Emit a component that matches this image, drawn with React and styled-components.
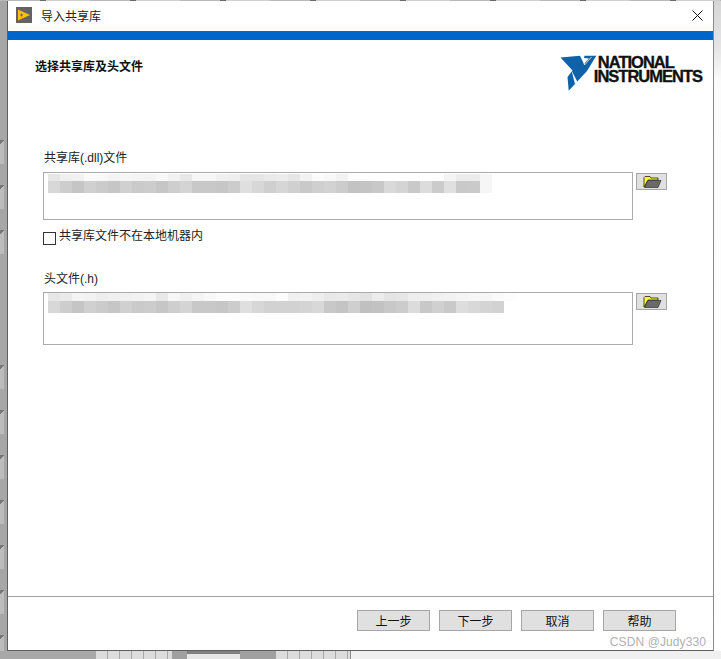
import React from "react";
import styled, { createGlobalStyle } from "styled-components";

const Global = createGlobalStyle`
  html, body { margin: 0; padding: 0; background: #f2f2f2; }
  #root { width: 721px; height: 659px; overflow: hidden; }
  * { box-sizing: border-box; }
`;

const Page = styled.div`
  width: 721px;
  height: 659px;
  display: flex;
  flex-direction: column;
  font-family: "Liberation Sans", "Noto Sans CJK SC", sans-serif;
  font-size: 12px;
  color: #111;
`;
const TopEdge = styled.div`
  height: 1px;
  flex: none;
  background: repeating-linear-gradient(90deg, #b9b9b9 0 40px, #6a6a6a 40px 46px, #d0d0d0 46px 90px);
`;
const Middle = styled.div`
  flex: none;
  height: 650px;
  display: flex;
`;
const LeftBackdrop = styled.div`
  width: 7px;
  flex: none;
  overflow: hidden;
  padding-top: 4px;
  background: #a6a6a6;
`;
const Tick = styled.div`
  height: 45px;
  background: ${(p) =>
    p.$on
      ? "linear-gradient(135deg, #777 0 3px, transparent 3px) 0 0 / 4px 5px no-repeat, linear-gradient(90deg, #bcbcbc 0 4px, transparent 4px) 0 0 / 7px 24px no-repeat"
      : "none"};
`;
const RightBackdrop = styled.div`
  width: 8px;
  flex: none;
  background: linear-gradient(180deg, #d6d6d6 0, #e4e4e4 45px, #fbfbfb 80px, #fff 100%);
`;
const Window = styled.div`
  width: 707px;
  flex: none;
  background: #fff;
  border-left: 1px solid #5f5f5f;
  border-right: 1px solid #8a8a8a;
  border-bottom: 1px solid #5f5f5f;
  display: flex;
  flex-direction: column;
`;
const TitleBar = styled.div`
  height: 30px;
  flex: none;
  display: flex;
  align-items: center;
  padding: 0 8px 2px 8px;
  gap: 9px;
`;
const TitleText = styled.span`
  flex: 1;
  font-size: 12px;
  color: #222;
`;
const CloseIcon = styled.svg`
  width: 11px;
  height: 11px;
  margin-right: 2px;
  flex: none;
`;
const BlueBar = styled.div`
  height: 9px;
  flex: none;
  background: #0066cc;
`;
const Header = styled.div`
  flex: none;
  height: 60px;
  display: flex;
  justify-content: space-between;
  align-items: flex-start;
  padding: 14px 11px 0 27px;
`;
const Heading = styled.h1`
  margin: 5px 0 0;
  font-size: 12px;
  line-height: 16px;
  font-weight: 700;
  color: #111;
`;
const Logo = styled.div`
  display: flex;
  margin-top: 1px;
`;
const LogoWords = styled.div`
  display: flex;
  flex-direction: column;
  font-weight: 700;
  font-size: 16.5px;
  line-height: 14px;
  letter-spacing: -1px;
  color: #111;
  white-space: nowrap;
  margin-left: -3px;
  -webkit-text-stroke: 0.35px #111;
`;
const LogoLine = styled.span`
  display: block;
  padding-left: ${(p) => p.$indent}px;
`;
const Content = styled.div`
  flex: 1;
  display: flex;
  flex-direction: column;
  padding: 50px 46px 0 35px;
`;
const FieldLabel = styled.div`
  font-size: 12px;
  line-height: 16px;
  margin: 0 0 6px 1px;
  color: #222;
`;
const FieldRow = styled.div`
  display: flex;
  align-items: flex-start;
  gap: 3px;
`;
const PathBox = styled.div`
  width: 590px;
  height: ${(p) => p.$h}px;
  flex: none;
  border: 1px solid #ababab;
  padding: ${(p) => p.$top}px 0 0 4px;
  background: #fff;
`;
const Smear = styled.div`
  display: flex;
  height: ${(p) => p.$h}px;
`;
const Pixel = styled.i`
  display: block;
  width: 12px;
  flex: none;
  height: 100%;
`;
const BrowseButton = styled.button`
  width: 31px;
  height: 17px;
  margin-top: 1px;
  padding: 0;
  flex: none;
  border: 1px solid #a6a6a6;
  background: #e0e0e0;
  display: flex;
  align-items: center;
  justify-content: center;
`;
const CheckRow = styled.label`
  display: flex;
  align-items: flex-start;
  gap: 3px;
  margin-top: 11px;
  height: 33px;
  line-height: 16px;
  color: #222;
`;
const CheckBox = styled.span`
  width: 13px;
  height: 13px;
  margin-top: 1px;
  border: 1px solid #333;
  background: #fff;
  flex: none;
`;
const CheckText = styled.span`
  margin-top: -3px;
`;
const SecondLabel = styled(FieldLabel)`
  margin-top: 7px;
  margin-bottom: 5px;
`;
const Footer = styled.div`
  flex: none;
  height: 54px;
  border-top: 1px solid #a0a0a0;
  display: flex;
  justify-content: flex-end;
  gap: 9px;
  padding: 13px 37px 0 0;
  position: relative;
`;
const FooterButton = styled.button`
  width: 73px;
  height: 21px;
  padding: 0;
  border: 1px solid #a6a6a6;
  background: #e0e0e0;
  font-family: inherit;
  font-size: 12px;
  color: #111;
`;
const Watermark = styled.span`
  position: absolute;
  right: 7px;
  bottom: 0;
  font-family: "Liberation Sans", sans-serif;
  font-size: 12px;
  line-height: 15px;
  color: #b0b0b0;
  letter-spacing: 0.1px;
`;
const BottomEdge = styled.div`
  flex: 1;
  display: flex;
`;
const EdgePart = styled.div`
  width: ${(p) => p.$w}px;
  flex: ${(p) => (p.$w ? "none" : 1)};
  background: ${(p) => p.$bg};
`;
const stripes = "repeating-linear-gradient(90deg, #dcdcdc 0 11px, #a8a8a8 11px 12px)";

const ticks = [0, 0, 0, 1, 1, 1, 0, 0, 1, 1, 1, 1, 1, 1, 1];

const tones1 = "d8 cd c5 d0 cb c6 d0 ca cc c6 ce d4 c8 c8 c6 cc df d7 cf d6 d0 c9 cf d2 cc c3 c4 c8 d9 d4 c9 dc cb e0 c9 ca f6".split(" ");
const top1 = "e6 f0 f2 fa f8 f4 f6 f4 f3 f8 f2 e8 f6 f6 f0 ee e5 e5 ea ec e6 f2 fb f8 f2 fc fe fe ff ff ff ff ff f4 ec ec f6".split(" ");
const tones2 = "d8 cd c5 d0 cb c6 d0 ca cc c6 ce d4 c8 c8 c6 cc df d7 d2 d2 d2 d4 d8 c8 c4 cf c0 c2 c8 cc dc c8 d0 c9 dd d8 d4 d2".split(" ");
const top2 = "e6 ea f4 f2 ee f0 f0 f2 f4 e8 f6 f0 f4 f8 fc fc fa f8 f8 fc f0 f2 ee e8 ea e6 e2 ec e4 e6 ee ee f0 f2 f4 f6 f6 fa fc".split(" ");

function BlurredPath({ top, main, topH }) {
  return (
    <>
      <Smear $h={topH}>
        {top.map((t, i) => (
          <Pixel key={i} style={{ background: `#${t}${t}${t}` }} />
        ))}
      </Smear>
      <Smear $h={12}>
        {main.map((t, i) => (
          <Pixel key={i} style={{ background: `#${t}${t}${t}` }} />
        ))}
      </Smear>
    </>
  );
}

const Folder = () => (
  <svg width="20" height="12" viewBox="0 0 20 12">
    <path d="M2 11V1.5L3 .5h5l1 1.5h7v2H6L2 11z" fill="#ffff1e" stroke="#222" strokeWidth=".8" />
    <path d="M2.5 11.5L6 4.5h13l-3 7z" fill="#6a6a6a" stroke="#222" strokeWidth=".6" />
  </svg>
);

const AppIcon = () => (
  <svg width="16" height="16" viewBox="0 0 16 16" style={{ flex: "none" }}>
    <rect width="16" height="16" fill="#636363" />
    <path d="M2 2.5L14 8 2 13.5z" fill="#fcc10f" />
    <path d="M4 8h3M5.5 6.5v3" stroke="#5a62a8" strokeWidth="1" />
  </svg>
);

const NiMark = () => (
  <svg width="37" height="36" viewBox="0 0 37 36" style={{ flex: "none" }}>
    <path d="M0.5 2.5L20 0.8 24 9 29 3.5 24 3 24.5 .7 36.3 .7 27 16 8.7 35.7 7.5 22 12.5 15.5z" fill="#0f62a8" />
    <path d="M11.5 15.5L17.5 27 15 29z" fill="#fff" />
    <path d="M23 1.5l1.5 8.5 7-8" stroke="#fff" strokeWidth=".7" fill="none" />
  </svg>
);

export default function App() {
  return (
    <Page>
      <Global />
      <TopEdge />
      <Middle>
        <LeftBackdrop>
          {ticks.map((t, i) => (
            <Tick key={i} $on={t} />
          ))}
        </LeftBackdrop>
        <Window>
          <TitleBar>
            <AppIcon />
            <TitleText>导入共享库</TitleText>
            <CloseIcon viewBox="0 0 11 11">
              <path d="M.5.5l10 10M10.5.5l-10 10" stroke="#111" strokeWidth="1" fill="none" />
            </CloseIcon>
          </TitleBar>
          <BlueBar />
          <Header>
            <Heading>选择共享库及头文件</Heading>
            <Logo>
              <NiMark />
              <LogoWords>
                <LogoLine $indent={4}>NATIONAL</LogoLine>
                <LogoLine $indent={0}>INSTRUMENTS</LogoLine>
              </LogoWords>
            </Logo>
          </Header>
          <Content>
            <FieldLabel>共享库(.dll)文件</FieldLabel>
            <FieldRow>
              <PathBox $h={48} $top={1}>
                <BlurredPath top={top1} main={tones1} topH={7} />
              </PathBox>
              <BrowseButton aria-label="浏览">
                <Folder />
              </BrowseButton>
            </FieldRow>
            <CheckRow>
              <CheckBox />
              <CheckText>共享库文件不在本地机器内</CheckText>
            </CheckRow>
            <SecondLabel>头文件(.h)</SecondLabel>
            <FieldRow>
              <PathBox $h={53} $top={0}>
                <BlurredPath top={top2} main={tones2} topH={8} />
              </PathBox>
              <BrowseButton aria-label="浏览">
                <Folder />
              </BrowseButton>
            </FieldRow>
          </Content>
          <Footer>
            <FooterButton>上一步</FooterButton>
            <FooterButton>下一步</FooterButton>
            <FooterButton>取消</FooterButton>
            <FooterButton>帮助</FooterButton>
            <Watermark>CSDN @Judy330</Watermark>
          </Footer>
        </Window>
        <RightBackdrop />
      </Middle>
      <BottomEdge>
        <EdgePart $w={96} $bg="#a8a8a8" />
        <EdgePart $w={76} $bg={stripes} />
        <EdgePart $w={15} $bg="#a0a0a0" />
        <EdgePart $w={53} $bg="linear-gradient(180deg, #808080 0 3px, #e6e6e6 3px)" />
        <EdgePart $w={36} $bg="#a0a0a0" />
        <EdgePart $w={74} $bg={stripes} />
        <EdgePart $bg="linear-gradient(90deg, #8c8c8c 0 1px, #f0f0f0 1px)" />
      </BottomEdge>
    </Page>
  );
}
